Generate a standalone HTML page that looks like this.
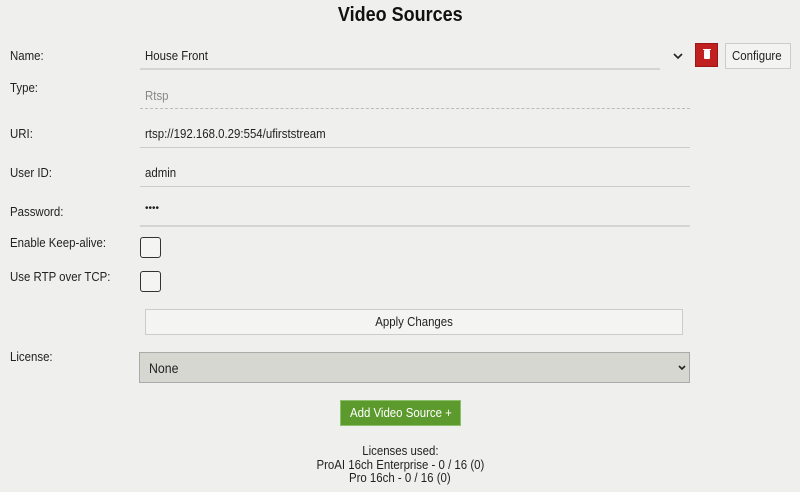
<!DOCTYPE html>
<html><head><style>
body{margin:0;width:800px;height:492px;background:#efefed;font-family:"Liberation Sans",sans-serif;color:#222;position:relative;overflow:hidden}
.a{position:absolute;font-size:13px;white-space:nowrap}
.c{display:inline-block;transform:scaleX(0.88);transform-origin:left}
.line{position:absolute;height:0;border-bottom:1px solid #ccc}
.cb{position:absolute;width:19px;height:19px;border:1px solid #333;border-radius:3px;background:#f4f4f2}
</style></head><body>
<div class="a" style="left:0;width:800px;text-align:center;top:4px;font-size:20px;font-weight:bold;color:#111"><span style="display:inline-block;transform:scaleX(0.9)">Video Sources</span></div>

<div class="a" style="left:10px;top:48px"><span class="c">Name:</span></div>
<div class="a" style="left:145px;top:48px"><span class="c">House Front</span></div>
<div class="line" style="left:140px;width:520px;top:68px;border-bottom:2px solid #d4d4d2"></div>
<svg style="position:absolute;left:673px;top:53px" width="10" height="7"><path d="M1 1 L5 5 L9 1" stroke="#222" stroke-width="1.6" fill="none"/></svg>
<div style="position:absolute;left:695px;top:43px;width:23px;height:24px;background:#c0201f;border:1px solid #9a1717;box-sizing:border-box"></div>
<div style="position:absolute;left:704px;top:50px;width:6px;height:9px;background:#fff;border-radius:1px"></div>
<div style="position:absolute;left:703px;top:49px;width:8px;height:1px;background:#fff"></div>
<div style="position:absolute;left:725px;top:43px;width:66px;height:26px;border:1px solid #ccc;box-sizing:border-box;background:#f3f3f1"></div>
<div class="a" style="left:732px;top:48px"><span class="c">Configure</span></div>

<div class="a" style="left:10px;top:80px"><span class="c">Type:</span></div>
<div class="a" style="left:145px;top:88px;color:#888"><span class="c">Rtsp</span></div>
<div class="line" style="left:140px;width:550px;top:108px;border-bottom:1px dashed #bbb"></div>

<div class="a" style="left:10px;top:126px"><span class="c">URI:</span></div>
<div class="a" style="left:145px;top:126px"><span class="c">rtsp://192.168.0.29:554/ufirststream</span></div>
<div class="line" style="left:140px;width:550px;top:147px"></div>

<div class="a" style="left:10px;top:165px"><span class="c">User ID:</span></div>
<div class="a" style="left:145px;top:165px"><span class="c">admin</span></div>
<div class="line" style="left:140px;width:550px;top:186px"></div>

<div class="a" style="left:10px;top:204px"><span class="c">Password:</span></div>
<div class="a" style="left:145px;top:203px;font-size:10px">••••</div>
<div class="line" style="left:140px;width:550px;top:225px;border-bottom:2px solid #d4d4d2"></div>

<div class="a" style="left:10px;top:235px"><span class="c">Enable Keep-alive:</span></div>
<div class="cb" style="left:140px;top:237px"></div>
<div class="a" style="left:10px;top:269px"><span class="c">Use RTP over TCP:</span></div>
<div class="cb" style="left:140px;top:271px"></div>

<div style="position:absolute;left:145px;top:309px;width:538px;height:26px;border:1px solid #ccc;box-sizing:border-box;background:#f4f4f2"></div>
<div class="a" style="left:145px;width:538px;text-align:center;top:314px"><span style="display:inline-block;transform:scaleX(0.88)">Apply Changes</span></div>

<div class="a" style="left:10px;top:349px"><span class="c">License:</span></div>
<div style="position:absolute;left:139px;top:352px;width:551px;height:31px;background:#d6d7d1;border:1px solid #aaa;box-sizing:border-box"></div>
<div class="a" style="left:149px;top:360px;font-size:14px"><span class="c">None</span></div>
<svg style="position:absolute;left:678px;top:365px" width="8" height="6"><path d="M1 1 L4 4 L7 1" stroke="#222" stroke-width="1.6" fill="none"/></svg>

<div style="position:absolute;left:340px;top:400px;width:121px;height:26px;background:#5c9a2e;border:1px solid #8cbf6a;box-sizing:border-box"></div>
<div class="a" style="left:340px;width:121px;text-align:center;top:405px;color:#fff"><span style="display:inline-block;transform:scaleX(0.88)">Add Video Source +</span></div>

<div class="a" style="left:0;width:800px;text-align:center;top:443px"><span style="display:inline-block;transform:scaleX(0.88)">Licenses used:</span></div>
<div class="a" style="left:0;width:800px;text-align:center;top:457px"><span style="display:inline-block;transform:scaleX(0.88)">ProAI 16ch Enterprise - 0 / 16 (0)</span></div>
<div class="a" style="left:0;width:800px;text-align:center;top:470px"><span style="display:inline-block;transform:scaleX(0.88)">Pro 16ch - 0 / 16 (0)</span></div>
</body></html>
